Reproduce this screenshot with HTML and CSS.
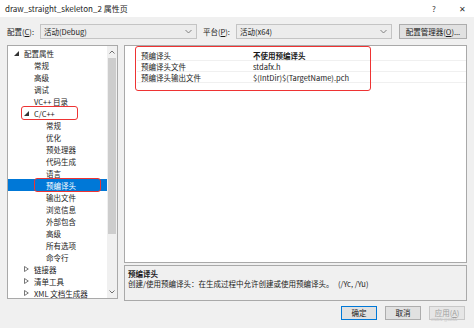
FILE: index.html
```html
<!DOCTYPE html>
<html>
<head>
<meta charset="utf-8">
<link rel="stylesheet" href="styles.css">
</head>
<body>
<div class="win">
  <div class="titlebar">
    <span class="title">draw_straight_skeleton_2 属性页</span>
    <span class="tb-btn help">?</span>
    <span class="tb-btn close">✕</span>
  </div>
  <div class="toolbar">
    <span class="lab lab1">配置(<u>C</u>):</span>
    <div class="combo combo1"><span>活动(Debug)</span><svg class="chev" width="7" height="5" viewBox="0 0 7 5"><path d="M0.5 1 L3.5 4 L6.5 1" fill="none" stroke="#777" stroke-width="0.9"/></svg></div>
    <span class="lab lab2">平台(<u>P</u>):</span>
    <div class="combo combo2"><span>活动(x64)</span><svg class="chev" width="7" height="5" viewBox="0 0 7 5"><path d="M0.5 1 L3.5 4 L6.5 1" fill="none" stroke="#777" stroke-width="0.9"/></svg></div>
    <div class="btn mgr">配置管理器(<u>O</u>)...</div>
  </div>
  <div class="main">
    <div class="tree">
      <div class="tree-items">
        <div class="row l1"><span class="tw"><svg width="5" height="5" viewBox="0 0 5 5"><path d="M5 0 L5 5 L0 5 Z" fill="#333"/></svg></span><span>配置属性</span></div>
        <div class="row l2"><span class="tw"></span><span>常规</span></div>
        <div class="row l2"><span class="tw"></span><span>高级</span></div>
        <div class="row l2"><span class="tw"></span><span>调试</span></div>
        <div class="row l2"><span class="tw"></span><span>VC++ 目录</span></div>
        <div class="row l2"><span class="tw"><svg width="5" height="5" viewBox="0 0 5 5"><path d="M5 0 L5 5 L0 5 Z" fill="#333"/></svg></span><span>C/C++</span><i class="mark mark-cpp"></i></div>
        <div class="row l3"><span class="tw"></span><span>常规</span></div>
        <div class="row l3"><span class="tw"></span><span>优化</span></div>
        <div class="row l3"><span class="tw"></span><span>预处理器</span></div>
        <div class="row l3"><span class="tw"></span><span>代码生成</span></div>
        <div class="row l3"><span class="tw"></span><span>语言</span></div>
        <div class="row l3 sel"><span class="tw"></span><span>预编译头</span><i class="mark mark-pch"></i></div>
        <div class="row l3"><span class="tw"></span><span>输出文件</span></div>
        <div class="row l3"><span class="tw"></span><span>浏览信息</span></div>
        <div class="row l3"><span class="tw"></span><span>外部包含</span></div>
        <div class="row l3"><span class="tw"></span><span>高级</span></div>
        <div class="row l3"><span class="tw"></span><span>所有选项</span></div>
        <div class="row l3"><span class="tw"></span><span>命令行</span></div>
        <div class="row l2"><span class="tw"><svg width="5" height="6" viewBox="0 0 5 6"><path d="M0.5 0.5 L4.3 3 L0.5 5.5 Z" fill="none" stroke="#555" stroke-width="0.8"/></svg></span><span>链接器</span></div>
        <div class="row l2"><span class="tw"><svg width="5" height="6" viewBox="0 0 5 6"><path d="M0.5 0.5 L4.3 3 L0.5 5.5 Z" fill="none" stroke="#555" stroke-width="0.8"/></svg></span><span>清单工具</span></div>
        <div class="row l2"><span class="tw"><svg width="5" height="6" viewBox="0 0 5 6"><path d="M0.5 0.5 L4.3 3 L0.5 5.5 Z" fill="none" stroke="#555" stroke-width="0.8"/></svg></span><span>XML 文档生成器</span></div>
      </div>
      <div class="vscroll">
        <svg class="arr" width="6" height="4" viewBox="0 0 6 4"><path d="M0.5 3.5 L3 1 L5.5 3.5" fill="none" stroke="#606060" stroke-width="0.9"/></svg>
        <div class="track"><div class="thumb"></div></div>
        <svg class="arr" width="6" height="4" viewBox="0 0 6 4"><path d="M0.5 0.5 L3 3 L5.5 0.5" fill="none" stroke="#606060" stroke-width="0.9"/></svg>
      </div>
    </div>
    <div class="right">
      <div class="grid">
        <div class="prow"><span class="pname">预编译头</span><span class="pval bold">不使用预编译头</span></div>
        <div class="prow"><span class="pname">预编译头文件</span><span class="pval">stdafx.h</span></div>
        <div class="prow"><span class="pname">预编译头输出文件</span><span class="pval">$(IntDir)$(TargetName).pch</span></div>
        <i class="mark mark-grid"></i>
      </div>
      <div class="desc">
        <div class="desc-title">预编译头</div>
        <div class="desc-text"><span class="dt">创建/使用预编译头：在生成过程中允许创建或使用预编译头。</span><span>(/Yc, /Yu)</span></div>
      </div>
    </div>
  </div>
  <div class="footer">
    <div class="btn fbtn ok">确定</div>
    <div class="btn fbtn">取消</div>
    <div class="btn fbtn dis"><span class="btxt">应用(<u>A</u>)</span><span class="wm">CSDN @GMA</span></div>
  </div>
</div>
</body>
</html>
```
FILE: styles.css
```css
html, body {
  margin: 0;
  padding: 0;
}
body {
  width: 474px;
  height: 328px;
  overflow: hidden;
  background: #f0f0f0;
  font-family: "Noto Sans CJK SC", "Noto Sans", sans-serif;
  font-size: 7.5px;
  color: #1a1a1a;
}
.win {
  display: flex;
  flex-direction: column;
  height: 328px;
}
.titlebar {
  height: 17px;
  background: #fff;
  display: flex;
  align-items: center;
  padding-left: 5px;
  font-size: 8px;
  color: #222;
}
.title { flex: 1; }
.tb-btn {
  color: #333;
  text-align: center;
}
.help { width: 14px; margin-right: 14px; font-size: 8px; }
.close { width: 14px; margin-right: 5px; font-size: 8px; }
.toolbar {
  display: flex;
  align-items: center;
  height: 15px;
  margin-top: 7px;
  padding-left: 7px;
}
.lab { white-space: nowrap; }
.lab1 { width: 33px; }
.lab2 { width: 33px; margin-left: 6px; }
.combo {
  height: 15px;
  box-sizing: border-box;
  border: 1px solid #c4c4c4;
  background: #ececec;
  display: flex;
  align-items: center;
  justify-content: space-between;
  padding: 0 4px 0 3px;
}
.combo1 { width: 157px; }
.combo2 { width: 156px; }
.btn {
  box-sizing: border-box;
  border: 1px solid #adadad;
  background: #e1e1e1;
  display: flex;
  align-items: center;
  justify-content: center;
  height: 15px;
  white-space: nowrap;
}
.mgr { width: 68px; margin-left: 7px; }
.main {
  display: flex;
  margin-top: 6px;
  padding-left: 7px;
  gap: 6px;
}
.tree {
  width: 111px;
  height: 254px;
  box-sizing: border-box;
  border: 1px solid #a9a9a9;
  background: #fff;
  display: flex;
}
.tree-items {
  flex: 1;
  padding-top: 1px;
}
.row {
  position: relative;
  height: 12px;
  display: flex;
  align-items: center;
  white-space: nowrap;
}
.tw {
  width: 10px;
  display: flex;
  align-items: center;
}
.l1 { padding-left: 6px; }
.l2 { padding-left: 16px; }
.l3 { padding-left: 28px; }
.sel { background: #0078d7; color: #fff; }
.mark {
  position: absolute;
  border: 1.5px solid #e33;
  border-radius: 3px;
  box-sizing: border-box;
}
.mark-cpp { left: 13px; top: -1px; width: 57px; height: 14px; }
.mark-pch { left: 26px; top: -1px; width: 67px; height: 14px; }
.vscroll {
  width: 10px;
  background: #f0f0f0;
  display: flex;
  flex-direction: column;
  align-items: center;
}
.arr { margin: 4px 0; flex: none; }
.track {
  flex: 1;
  width: 100%;
  display: flex;
  justify-content: center;
}
.thumb {
  width: 8px;
  height: 176px;
  margin-top: 0;
  background: #cdcdcd;
}
.right {
  width: 343px;
  display: flex;
  flex-direction: column;
  gap: 2px;
}
.grid {
  position: relative;
  height: 218px;
  box-sizing: border-box;
  border: 1px solid #a9a9a9;
  background: #fff;
  padding-top: 4px;
}
.prow {
  display: flex;
  height: 10px;
  align-items: center;
  border-bottom: 1px solid #f0f0f0;
  margin-left: 12px;
}
.pname { width: 112px; padding-left: 4px; }
.pval { flex: 1; }
.bold { font-weight: bold; }
.mark-grid { left: 10px; top: 0px; width: 236px; height: 45px; }
.desc {
  height: 36px;
  box-sizing: border-box;
  border: 1px solid #a9a9a9;
  background: #f0f0f0;
  padding: 3px 0 0 3px;
  line-height: 10px;
}
.desc-title { font-weight: bold; }
.dt { display: inline-block; width: 210px; }
.footer {
  display: flex;
  justify-content: flex-end;
  gap: 8px;
  padding-right: 9px;
  margin-top: 5px;
}
.fbtn { width: 36px; height: 14px; position: relative; line-height: 8px; }
.ok { border-color: #0078d7; }
.dis { color: #a0a0a0; border-color: #c8c8c8; background: #e6e6e6; }
.btxt { display: block; line-height: 8px; }
.wm {
  position: absolute;
  left: 1px;
  top: 11px;
  font-size: 4px;
  line-height: 4px;
  color: #c4c4c4;
  font-family: "DejaVu Sans", sans-serif;
}
```
